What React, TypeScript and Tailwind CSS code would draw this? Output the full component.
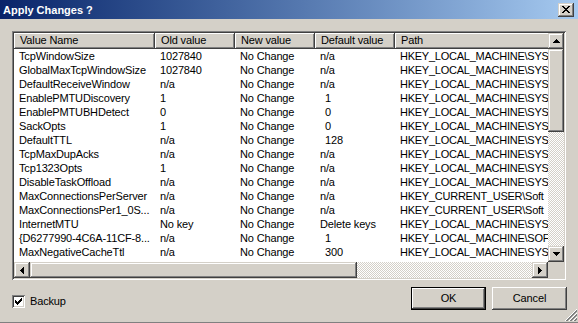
import React from "react";

type Row = [string, string, string, string, string, boolean?];

const rows: Row[] = [
  ["TcpWindowSize", "1027840", "No Change", "n/a", "HKEY_LOCAL_MACHINE\\SYS"],
  ["GlobalMaxTcpWindowSize", "1027840", "No Change", "n/a", "HKEY_LOCAL_MACHINE\\SYS"],
  ["DefaultReceiveWindow", "n/a", "No Change", "n/a", "HKEY_LOCAL_MACHINE\\SYS"],
  ["EnablePMTUDiscovery", "1", "No Change", "1", "HKEY_LOCAL_MACHINE\\SYS", true],
  ["EnablePMTUBHDetect", "0", "No Change", "0", "HKEY_LOCAL_MACHINE\\SYS", true],
  ["SackOpts", "1", "No Change", "0", "HKEY_LOCAL_MACHINE\\SYS", true],
  ["DefaultTTL", "n/a", "No Change", "128", "HKEY_LOCAL_MACHINE\\SYS", true],
  ["TcpMaxDupAcks", "n/a", "No Change", "n/a", "HKEY_LOCAL_MACHINE\\SYS"],
  ["Tcp1323Opts", "1", "No Change", "n/a", "HKEY_LOCAL_MACHINE\\SYS"],
  ["DisableTaskOffload", "n/a", "No Change", "n/a", "HKEY_LOCAL_MACHINE\\SYS"],
  ["MaxConnectionsPerServer", "n/a", "No Change", "n/a", "HKEY_CURRENT_USER\\Soft"],
  ["MaxConnectionsPer1_0S...", "n/a", "No Change", "n/a", "HKEY_CURRENT_USER\\Soft"],
  ["InternetMTU", "No key", "No Change", "Delete keys", "HKEY_LOCAL_MACHINE\\SYS"],
  ["{D6277990-4C6A-11CF-8...", "n/a", "No Change", "1", "HKEY_LOCAL_MACHINE\\SOF", true],
  ["MaxNegativeCacheTtl", "n/a", "No Change", "300", "HKEY_LOCAL_MACHINE\\SYS", true],
  ["MaxCacheEntryTtlLimit", "n/a", "No Change", "n/a", "HKEY_LOCAL_MACHINE\\SYS"],
];

function Pixels({ pattern, color = "#000" }: { pattern: string[]; color?: string }) {
  const w = pattern[0].length;
  const h = pattern.length;
  const rects: React.ReactNode[] = [];
  pattern.forEach((r, y) =>
    r.split("").forEach((c, x) => {
      if (c === "x") rects.push(<rect key={`${x}-${y}`} x={x} y={y} width={1} height={1} fill={color} />);
    })
  );
  return (
    <svg width={w} height={h} shapeRendering="crispEdges" className="block">
      {rects}
    </svg>
  );
}

const upArrow = ["...x...", "..xxx..", ".xxxxx.", "xxxxxxx"];
const downArrow = ["xxxxxxx", ".xxxxx.", "..xxx..", "...x..."];
const leftArrow = ["...x", "..xx", ".xxx", "xxxx", ".xxx", "..xx", "...x"];
const rightArrow = ["x...", "xx..", "xxx.", "xxxx", "xxx.", "xx..", "x..."];
const closeX = [
  "xx....xx",
  ".xx..xx.",
  "..xxxx..",
  "...xx...",
  "..xxxx..",
  ".xx..xx.",
  "xx....xx",
];
const check = [
  "......x",
  ".....xx",
  "x...xxx",
  "xx.xxx.",
  "xxxxx..",
  ".xxx...",
  "..x....",
];

function Grip() {
  const rects: React.ReactNode[] = [];
  for (let y = 0; y < 12; y++) {
    for (let x = 0; x < 12; x++) {
      const d = x + y;
      if (d < 11) continue;
      const m = (d - 11) % 4;
      const fill = m === 0 ? "#ffffff" : m === 3 ? null : "#808080";
      if (fill) rects.push(<rect key={`${x}-${y}`} x={x} y={y} width={1} height={1} fill={fill} />);
    }
  }
  return (
    <svg width={12} height={12} shapeRendering="crispEdges" className="block">
      {rects}
    </svg>
  );
}

function ScrollBtn({ children }: { children: React.ReactNode }) {
  return (
    <div className="w-[16px] h-[16px] shrink-0 bg-[#d4d0c8] flex items-center justify-center shadow-[inset_-1px_-1px_#404040,inset_1px_1px_#d4d0c8,inset_-2px_-2px_#808080,inset_2px_2px_#fff]">
      {children}
    </div>
  );
}

const widths = ["w-[141px]", "w-[80px]", "w-[80px]", "w-[80px]", "w-[200px]"];

export default function App() {
  return (
    <div className="relative w-[578px] h-[323px] bg-[#d4d0c8] overflow-hidden flex flex-col text-[11px] tracking-[-0.15px] text-black font-['Liberation_Sans',Arial,sans-serif] border-b border-[#808080]">
      {/* Title bar */}
      <div className="h-[19px] shrink-0 flex items-center justify-between pl-[3px] pr-[4px] bg-linear-to-r from-[#0a246a] to-[#a6caf0]">
        <span className="text-white font-bold text-[11px] tracking-normal leading-none pt-[1px]">Apply Changes ?</span>
        <div className="w-[16px] h-[14px] bg-[#d4d0c8] flex items-center justify-center shadow-[inset_-1px_-1px_#404040,inset_1px_1px_#d4d0c8,inset_-2px_-2px_#808080,inset_2px_2px_#fff]">
          <Pixels pattern={closeX} />
        </div>
      </div>

      {/* List view */}
      <div className="pl-[12px] pt-[12px]">
        <div className="w-[554px] h-[249px] p-[2px] bg-white shadow-[inset_1px_1px_#808080,inset_-1px_-1px_#fff,inset_2px_2px_#404040,inset_-2px_-2px_#d4d0c8]">
          <div className="w-[550px] h-[245px] flex flex-col">
            <div className="flex h-[229px]">
              <div className="w-[534px] h-[229px] overflow-hidden bg-white">
                {/* header */}
                <div className="flex h-[16px] w-max">
                  {["Value Name", "Old value", "New value", "Default value", "Path"].map((h, i) => (
                    <div
                      key={h}
                      className={`${widths[i]} h-[16px] shrink-0 bg-[#d4d0c8] pl-[6px] leading-[15px] whitespace-nowrap overflow-hidden shadow-[inset_-1px_-1px_#404040,inset_1px_1px_#fff,inset_-2px_-2px_#808080]`}
                    >
                      {h}
                    </div>
                  ))}
                </div>
                {/* rows */}
                {rows.map((r, ri) => (
                  <div key={ri} className="flex h-[14px] leading-[14px] w-max whitespace-nowrap">
                    {r.slice(0, 5).map((c, ci) => (
                      <div
                        key={ci}
                        className={`${widths[ci]} shrink-0 overflow-hidden pl-[5px] ${ci === 4 ? "tracking-[-0.25px]" : ""}`}
                      >
                        <span className={ci === 3 && r[5] ? "pl-[5px]" : ""}>{c as string}</span>
                      </div>
                    ))}
                  </div>
                ))}
              </div>
              {/* vertical scrollbar */}
              <div className="w-[16px] h-[229px] flex flex-col">
                <ScrollBtn>
                  <Pixels pattern={upArrow} />
                </ScrollBtn>
                <div className="h-[83px] w-[16px] bg-[#d4d0c8] shrink-0 shadow-[inset_-1px_-1px_#404040,inset_1px_1px_#d4d0c8,inset_-2px_-2px_#808080,inset_2px_2px_#fff]" />
                <div className="flex-1 bg-[image:repeating-conic-gradient(#d4d0c8_0_25%,#ffffff_0_50%)] bg-[length:2px_2px]" />
                <ScrollBtn>
                  <Pixels pattern={downArrow} />
                </ScrollBtn>
              </div>
            </div>
            {/* horizontal scrollbar */}
            <div className="flex h-[16px]">
              <div className="w-[534px] h-[16px] flex">
                <ScrollBtn>
                  <Pixels pattern={leftArrow} />
                </ScrollBtn>
                <div className="w-[327px] h-[16px] bg-[#d4d0c8] shrink-0 shadow-[inset_-1px_-1px_#404040,inset_1px_1px_#d4d0c8,inset_-2px_-2px_#808080,inset_2px_2px_#fff]" />
                <div className="flex-1 bg-[image:repeating-conic-gradient(#d4d0c8_0_25%,#ffffff_0_50%)] bg-[length:2px_2px]" />
                <ScrollBtn>
                  <Pixels pattern={rightArrow} />
                </ScrollBtn>
              </div>
              <div className="w-[16px] h-[16px] bg-[#d4d0c8]" />
            </div>
          </div>
        </div>
      </div>

      {/* Bottom row */}
      <div className="flex items-start justify-between pl-[12px] pr-[11px] mt-[7px]">
        <div className="flex items-center mt-[8px]">
          <div className="relative w-[13px] h-[13px] bg-white shadow-[inset_1px_1px_#808080,inset_-1px_-1px_#fff,inset_2px_2px_#404040,inset_-2px_-2px_#d4d0c8] flex items-center justify-center">
            <Pixels pattern={check} />
          </div>
          <span className="ml-[5px] leading-[13px]">Backup</span>
        </div>
        <div className="flex">
          <div className="w-[75px] h-[23px] border border-black">
            <div className="w-full h-full flex items-center justify-center bg-[#d4d0c8] shadow-[inset_-1px_-1px_#404040,inset_1px_1px_#fff,inset_-2px_-2px_#808080,inset_2px_2px_#d4d0c8]">
              OK
            </div>
          </div>
          <div className="ml-[6px] w-[75px] h-[23px] flex items-center justify-center bg-[#d4d0c8] shadow-[inset_-1px_-1px_#404040,inset_1px_1px_#fff,inset_-2px_-2px_#808080,inset_2px_2px_#d4d0c8]">
            Cancel
          </div>
        </div>
      </div>

      <div className="absolute right-[1px] bottom-[1px]">
        <Grip />
      </div>
    </div>
  );
}
